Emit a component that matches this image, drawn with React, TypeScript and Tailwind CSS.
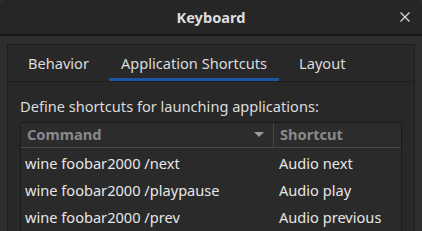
import React from "react";

const rows = [
  ["wine foobar2000 /next", "Audio next"],
  ["wine foobar2000 /playpause", "Audio play"],
  ["wine foobar2000 /prev", "Audio previous"],
];

export default function App() {
  return (
    <div
      className="w-[422px] h-[231px] overflow-hidden bg-[#2e2e2e] text-[#e3e3e3] text-[14.6px] leading-none"
      style={{ fontFamily: '"Noto Sans", "Open Sans", sans-serif' }}
    >
      <div className="relative h-[34px] bg-[#262626] flex items-center justify-center rounded-t-[6px]">
        <span className="font-bold text-[#dedede]">Keyboard</span>
        <svg className="absolute left-[400px] top-[12px]" width="10" height="10" viewBox="0 0 10 10">
          <path d="M0.5 0.5 L9.5 9.5 M9.5 0.5 L0.5 9.5" stroke="#d8d8d8" strokeWidth="1.3" />
        </svg>
      </div>
      <div className="h-[2px] bg-[#161616]" />
      <div className="pl-[7px] pt-[8px]">
        <div className="w-[408px] h-[200px] border border-[#1d1d1d] bg-[#282828]">
          <div className="h-[37px] flex items-stretch pl-[8px] gap-[8px] border-b border-[#1d1d1d]">
            <div className="px-[12px] flex items-center text-[#dcdcdc]">Behavior</div>
            <div className="px-[12px] flex items-center border-b-[3px] border-[#1b58a3] pt-[3px] text-[#dcdcdc]">
              Application Shortcuts
            </div>
            <div className="px-[12px] flex items-center text-[#dcdcdc]">Layout</div>
          </div>
          <div className="pl-[12px] pt-[17px]">
            <div className="text-[#dcdcdc]">Define shortcuts for launching applications:</div>
            <div className="mt-[8px] w-[382px] h-[120px] border border-[#1b1b1b] bg-[#2a2a2a]">
              <div className="h-[25px] flex border-b border-[#474747] bg-[#2c2c2c] text-[#8a8a8a] font-bold">
                <div className="w-[253px] flex items-center justify-between pl-[6px] pr-[9px] border-r border-[#474747]">
                  <span>Command</span>
                  <svg width="10" height="5" viewBox="0 0 10 5">
                    <path d="M0 0 L10 0 L5 5 Z" fill="#9a9a9a" />
                  </svg>
                </div>
                <div className="flex items-center pl-[6px]">Shortcut</div>
              </div>
              <div className="pt-[2px]">
                {rows.map(([c, s]) => (
                  <div key={c} className="h-[27px] flex items-center text-[#e6e6e6]">
                    <div className="w-[258px] pl-[4px]">{c}</div>
                    <div>{s}</div>
                  </div>
                ))}
              </div>
            </div>
          </div>
        </div>
      </div>
    </div>
  );
}
